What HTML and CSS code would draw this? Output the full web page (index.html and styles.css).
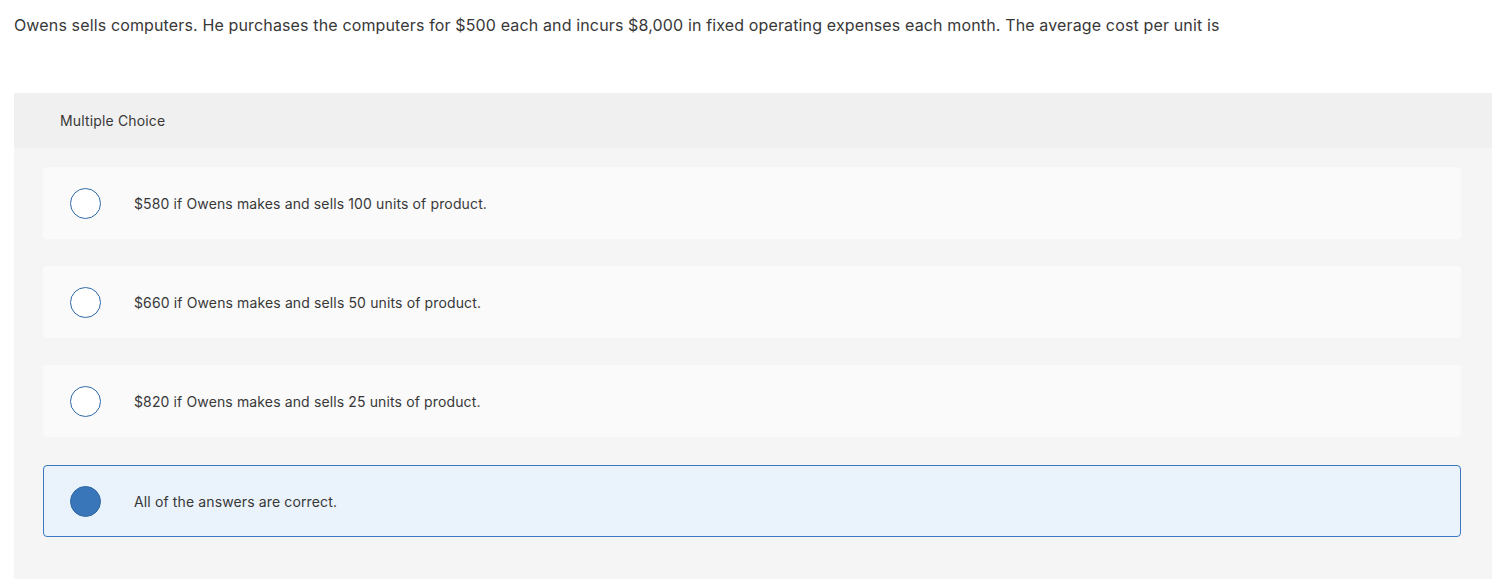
FILE: index.html
```html
<!DOCTYPE html>
<html>
<head>
<meta charset="utf-8">
<link rel="stylesheet" href="styles.css">
</head>
<body>
<p class="question">Owens sells computers. He purchases the computers for $500 each and incurs $8,000 in fixed operating expenses each month. The average cost per unit is</p>
<section class="panel">
  <div class="panel-head">Multiple Choice</div>
  <div class="options">
    <div class="option"><span class="radio"></span><span class="label">$580 if Owens makes and sells 100 units of product.</span></div>
    <div class="option"><span class="radio"></span><span class="label">$660 if Owens makes and sells 50 units of product.</span></div>
    <div class="option"><span class="radio"></span><span class="label">$820 if Owens makes and sells 25 units of product.</span></div>
    <div class="option selected"><span class="radio"></span><span class="label">All of the answers are correct.</span></div>
  </div>
</section>
</body>
</html>
```
FILE: styles.css
```css
html, body { margin: 0; padding: 0; background: #fff; }
body {
  font-family: "Inter", "Open Sans", sans-serif;
  color: #333;
  padding: 0 3px 0 14px;
}
.question {
  margin: 0;
  padding-top: 14px;
  font-size: 16px;
  letter-spacing: 0.14px;
  line-height: 22px;
  color: #383838;
  height: 79px;
}
.panel {
  background: #f5f5f5;
  height: 500px;
}
.panel-head {
  background: #f0f0f0;
  height: 55px;
  display: flex;
  align-items: center;
  padding-left: 46px;
  font-size: 14px;
  letter-spacing: 0.15px;
  color: #383838;
}
.options {
  display: flex;
  flex-direction: column;
  gap: 27px;
  padding: 19px 31px 0 29px;
}
.option {
  height: 72px;
  background: #fafafa;
  border-radius: 4px;
  display: flex;
  align-items: center;
  box-sizing: border-box;
  border: 1px solid transparent;
}
.option:nth-child(4) { margin-top: 1px; }
.radio {
  width: 29px;
  height: 29px;
  border: 1.5px solid #2f6aa8;
  border-radius: 50%;
  background: #fff;
  margin-left: 26px;
  flex: none;
}
.label {
  margin-left: 33px;
  font-size: 14px;
  letter-spacing: 0.13px;
  color: #383838;
}
.option.selected {
  background: #eaf2fb;
  border-color: #3a78c2;
}
.option.selected .radio {
  background: #3875b9;
  border-color: #2f66a3;
}
```
